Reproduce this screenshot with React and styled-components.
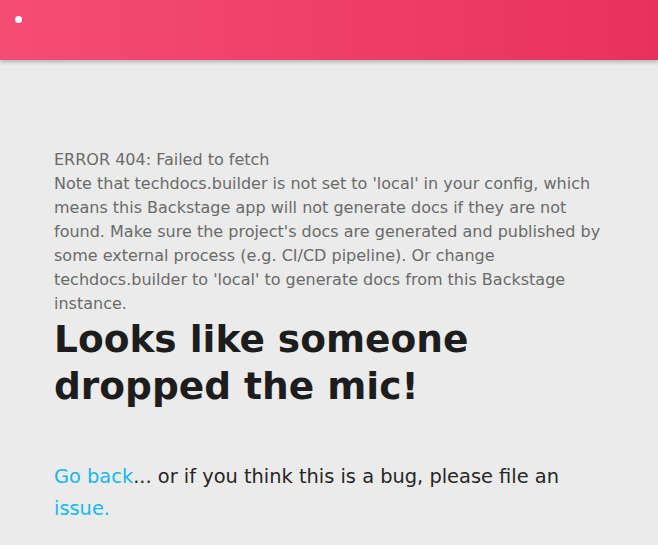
import styled, { createGlobalStyle } from "styled-components";

const GlobalStyle = createGlobalStyle`
    html, body {
        margin: 0;
        padding: 0;
        background: #ebebeb;
        font-family: "DejaVu Sans", "Noto Sans", sans-serif;
    }
`

const Page = styled.div`
    min-height: 545px;
    background: #ebebeb;
`

const Header = styled.header`
    height: 60px;
    background: linear-gradient(90deg, #f54c75 0%, #e8325d 100%);
    box-shadow: 0 2px 4px rgba(0, 0, 0, 0.25);
    display: flex;
    align-items: flex-start;
    padding: 16px 0 0 15px;
    box-sizing: border-box;
`

const Dot = styled.span`
    width: 7px;
    height: 7px;
    border-radius: 50%;
    background: #ffffff;
`

const Content = styled.main`
    padding: 88px 54px 0 54px;
`

const ErrorText = styled.div`
    color: #6a6a6a;
    font-size: 16px;
    line-height: 24px;
    max-width: 556px;
`

const Title = styled.h1`
    margin: 0;
    color: #1d1d1d;
    font-size: 37.5px;
    font-weight: 700;
    line-height: 47px;
    max-width: 460px;
`

const Message = styled.p`
    margin: 51px 0 0 0;
    color: #262626;
    font-size: 19.4px;
    line-height: 32px;
    max-width: 520px;
`

const Link = styled.a`
    color: #18b7ee;
    text-decoration: none;
`

function App() {
    return (
        <Page>
            <GlobalStyle />
            <Header>
                <Dot />
            </Header>
            <Content>
                <ErrorText>
                    ERROR 404: Failed to fetch
                    <br />
                    Note that techdocs.builder is not set to 'local' in your config, which means this Backstage app will not generate docs if they are not found. Make sure the project's docs are generated and published by some external process (e.g. CI/CD pipeline). Or change techdocs.builder to 'local' to generate docs from this Backstage instance.
                </ErrorText>
                <Title>Looks like someone dropped the mic!</Title>
                <Message>
                    <Link href="#">Go back</Link>... or if you think this is a bug, please file an <Link href="#">issue.</Link>
                </Message>
            </Content>
        </Page>
    )
}

export default App;
